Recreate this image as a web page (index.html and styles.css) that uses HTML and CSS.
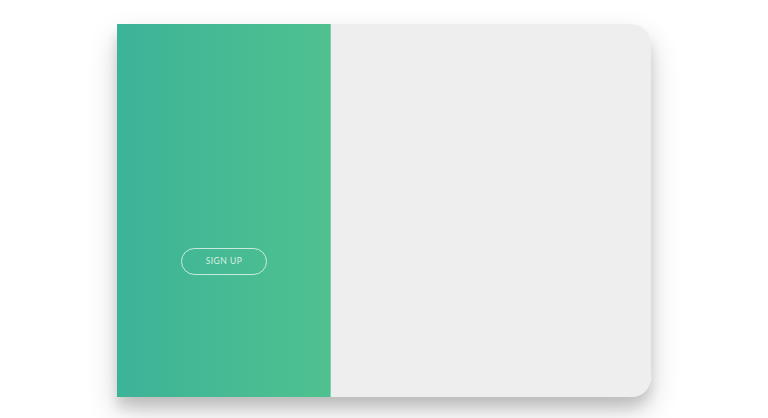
FILE: index.html
```html
<!DOCTYPE html>
<html>
<head>
<meta charset="utf-8">
<link rel="stylesheet" href="styles.css">
</head>
<body>
<div class="page">
  <div class="card">
    <div class="overlay">
      <button class="ghost">SIGN UP</button>
    </div>
    <div class="form-side"></div>
  </div>
</div>
</body>
</html>
```
FILE: styles.css
```css
html, body {
  margin: 0;
  padding: 0;
  background: #ffffff;
  font-family: Lato, "Open Sans", sans-serif;
}
.page {
  width: 768px;
  height: 418px;
  display: flex;
  justify-content: center;
  padding-top: 24px;
  box-sizing: border-box;
}
.card {
  width: 534px;
  height: 373px;
  display: flex;
  border-radius: 0 20px 20px 0;
  box-shadow: 0 14px 30px rgba(0,0,0,0.18), 0 10px 12px rgba(0,0,0,0.12);
}
.overlay {
  width: 214px;
  background: linear-gradient(to right, #3db398, #4fc18f);
  display: flex;
  align-items: center;
  justify-content: center;
  padding-top: 101px;
  padding-left: 1px;
  box-sizing: border-box;
  border-right: 1px solid rgba(255,255,255,0.35);
}
.ghost {
  width: 86px;
  height: 27px;
  border: 1px solid rgba(255,255,255,0.7);
  border-radius: 14px;
  background: transparent;
  color: rgba(255,255,255,0.8);
  font-family: Lato, "Open Sans", sans-serif;
  font-size: 8.5px;
  letter-spacing: 0.5px;
  padding: 0;
}
.form-side {
  flex: 1;
  background: #eeeeee;
  border-radius: 0 20px 20px 0;
}
```
